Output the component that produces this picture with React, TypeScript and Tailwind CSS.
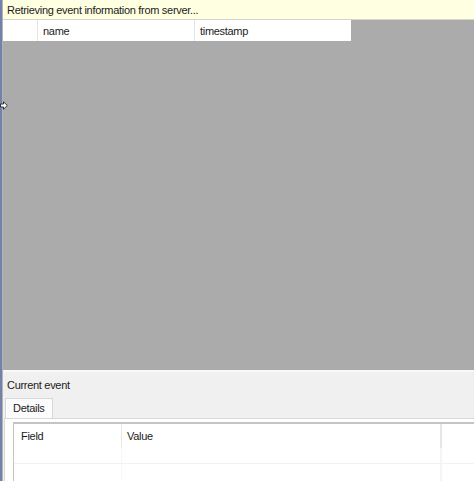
import React from "react";

export default function App() {
  const font = { fontFamily: '"Liberation Sans", Arial, sans-serif' };
  return (
    <div
      className="w-[474px] h-[481px] flex overflow-hidden bg-[#f0f0f0] text-[11px] tracking-[-0.3px] text-[#1b1b1b] relative"
      style={font}
    >
      <div className="w-[2px] h-full bg-[#7282aa] shrink-0" />
      <div className="w-[1px] h-full bg-[#b4b4b4] shrink-0" />
      <div className="flex-1 flex flex-col min-w-0">
        <div className="h-[20px] shrink-0 bg-[#ffffe1] border-b border-[#d6d6c8] flex items-center pl-[4px] pt-[1px]">
          Retrieving event information from server...
        </div>
        <div className="h-[350px] shrink-0 bg-[#ababab] flex flex-col">
          <div className="flex h-[21px] shrink-0">
            <div className="w-[35px] bg-white border-r border-[#e4e4e4]" />
            <div className="w-[157px] bg-white border-r border-[#e4e4e4] flex items-center pl-[5px] pt-[1px]">
              name
            </div>
            <div className="w-[156px] bg-white flex items-center pl-[5px] pt-[1px]">timestamp</div>
          </div>
        </div>
        <div className="h-[2px] shrink-0 bg-[#f8f8f8]" />
        <div className="flex-1 flex flex-col bg-[#f0f0f0]">
          <div className="h-[26px] shrink-0 flex items-center pl-[4px]">Current event</div>
          <div className="flex shrink-0 h-[20px] items-end pl-[2px]">
            <div className="w-[48px] h-[20px] bg-[#fcfcfc] border border-b-0 border-[#d9d9d9] flex items-center pl-[7px]">
              Details
            </div>
          </div>
          <div className="flex-1 bg-white border-t border-l border-[#d9d9d9] ml-[1px] pl-[8px] pt-[3px] flex flex-col">
            <div className="flex-1 border-t-2 border-l border-[#c4c4c4] bg-white flex flex-col">
              <div className="flex h-[24px] shrink-0">
                <div className="w-[108px] border-r border-[#e6e6e6] flex items-center pl-[7px]">Field</div>
                <div className="w-[320px] border-r-2 border-[#e6e6e6] flex items-center pl-[5px]">Value</div>
                <div className="flex-1" />
              </div>
              <div className="flex h-[16px] shrink-0 border-b border-[#f2f2f2]">
                <div className="w-[108px] border-r border-[#f7f7f7]" />
                <div className="w-[320px] border-r-2 border-[#f5f5f5]" />
                <div className="flex-1" />
              </div>
              <div className="flex flex-1">
                <div className="w-[108px] border-r border-[#f7f7f7]" />
                <div className="w-[320px] border-r-2 border-[#f5f5f5]" />
                <div className="flex-1" />
              </div>
            </div>
          </div>
        </div>
      </div>
      <svg
        className="absolute left-0 top-[101px]"
        width="8"
        height="9"
        viewBox="0 0 8 9"
      >
        <path d="M0.5 3 H3.5 V0.8 L7.3 4.5 L3.5 8.2 V6 H0.5 Z" fill="white" stroke="#222" strokeWidth="0.9" />
      </svg>
    </div>
  );
}
